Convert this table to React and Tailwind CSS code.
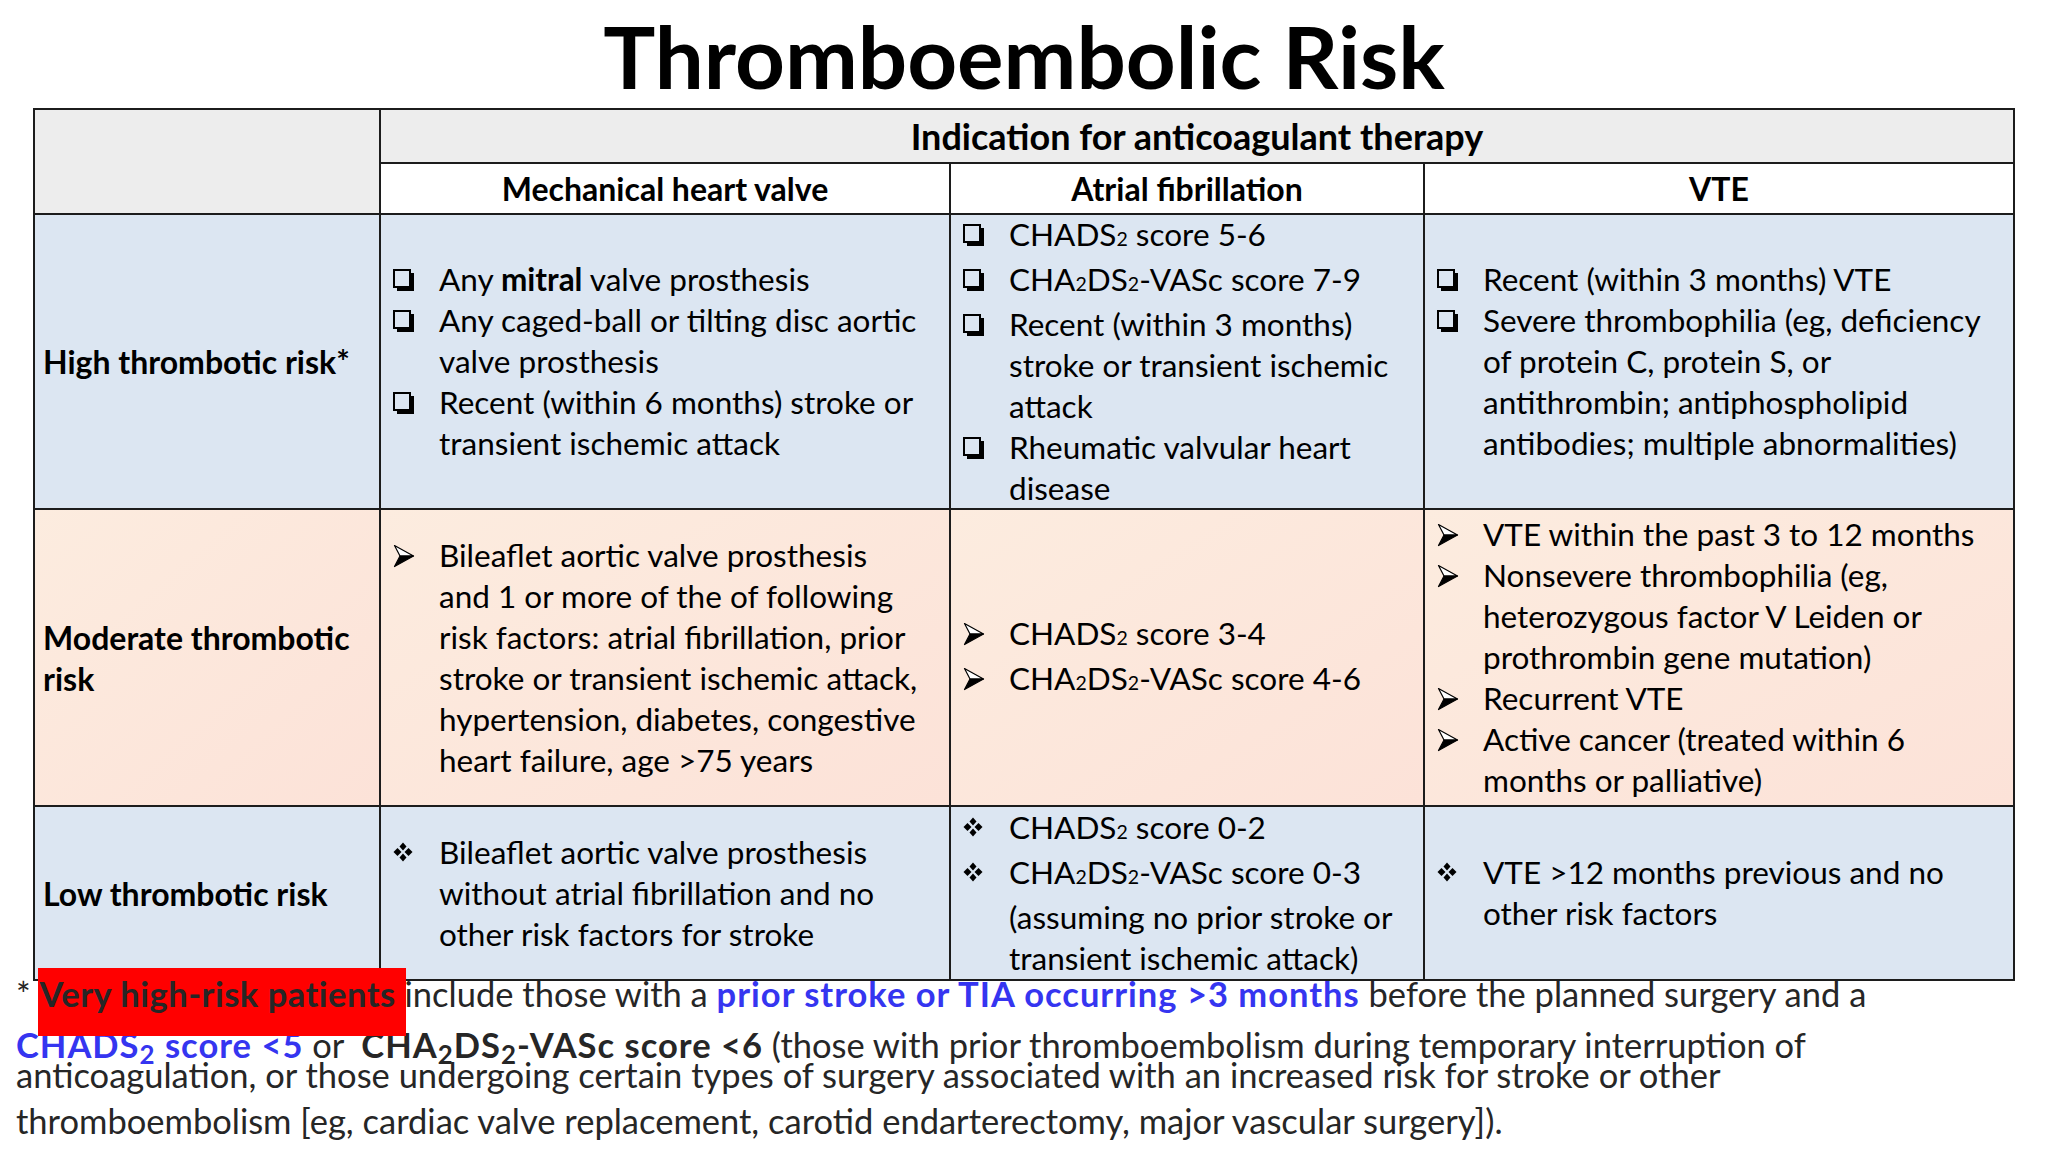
const S2 = () => <span className="text-[0.62em]">2</span>;

function BoxIcon() {
  return (
    <svg width="22" height="23" viewBox="0 0 22 23" className="mt-[10px]">
      <rect x="1" y="1" width="16" height="17" fill="none" stroke="#000" strokeWidth="2" />
      <path d="M18 4 H21 V22 H4 V19 H18 Z" fill="#000" />
    </svg>
  );
}

function ArrowIcon() {
  return (
    <svg width="22" height="24" viewBox="0 0 22 24" className="mt-[9px]">
      <path d="M1.5 1.5 L20.5 12 L7 12 Z" fill="#fff" stroke="#000" strokeWidth="1.2" strokeLinejoin="round" />
      <path d="M7 12 L20.5 12 L1.5 22.5 Z" fill="#000" stroke="#000" strokeWidth="1.2" strokeLinejoin="round" />
    </svg>
  );
}

function DiamondIcon() {
  return (
    <svg width="20" height="20" viewBox="0 0 20 20" className="mt-[10px]">
      <path d="M10 0.5 L13.5 4.5 L10 8.5 L6.5 4.5 Z" fill="#000" />
      <path d="M10 11.5 L13.5 15.5 L10 19.5 L6.5 15.5 Z" fill="#000" />
      <path d="M4.5 6 L8.5 10 L4.5 14 L0.5 10 Z" fill="#000" />
      <path d="M15.5 6 L19.5 10 L15.5 14 L11.5 10 Z" fill="#000" />
    </svg>
  );
}

const ICON = { box: BoxIcon, arrow: ArrowIcon, diamond: DiamondIcon };

function Bullets({ kind, items }) {
  const Icon = ICON[kind];
  return (
    <div className="flex h-full flex-col justify-center pl-[12px]">
      {items.map((lines, i) => (
        <div key={i} className="flex">
          <span className="flex w-[46px] shrink-0 items-start">
            <Icon />
          </span>
          <div className="whitespace-nowrap">
            {lines.map((ln, j) => (
              <div key={j}>{ln}</div>
            ))}
          </div>
        </div>
      ))}
    </div>
  );
}

function Label({ children }) {
  return (
    <div className="flex h-full items-center pl-[8px] text-[32px] font-bold">
      <div>{children}</div>
    </div>
  );
}

const blue = "bg-[#dce6f2]";
const peach = "bg-gradient-to-br from-[#fcecdf] to-[#fce2d8]";

export default function App() {
  return (
    <div className="h-[1152px] w-[2048px] overflow-hidden bg-white font-['Lato',sans-serif] text-black">
      <div className="flex h-[108px] justify-center pt-[12px]">
        <h1 className="text-[87px] font-bold leading-none">Thromboembolic Risk</h1>
      </div>

      <div className="px-[33px]">
        <div className="grid grid-cols-[344px_568px_472px_588px] grid-rows-[52px_49px_293px_295px_172px] gap-[2px] border-2 border-[#1c1c1c] bg-[#1c1c1c] text-[31.5px] leading-[41px]">
          <div className="row-span-2 bg-[#ededed]" />
          <div className="col-span-3 flex items-center justify-center bg-[#ededed] text-[36px] font-bold">
            Indication for anticoagulant therapy
          </div>
          <div className="flex items-center justify-center bg-white text-[32px] font-bold">Mechanical heart valve</div>
          <div className="flex items-center justify-center bg-white text-[32px] font-bold">Atrial fibrillation</div>
          <div className="flex items-center justify-center bg-white text-[32px] font-bold">VTE</div>

          {/* high */}
          <div className={blue}>
            <Label>High thrombotic risk*</Label>
          </div>
          <div className={blue}>
            <Bullets
              kind="box"
              items={[
                [<>Any <b>mitral</b> valve prosthesis</>],
                ["Any caged-ball or tilting disc aortic", "valve prosthesis"],
                ["Recent (within 6 months) stroke or", "transient ischemic attack"],
              ]}
            />
          </div>
          <div className={blue}>
            <Bullets
              kind="box"
              items={[
                [<>CHADS<S2 /> score 5-6</>],
                [<>CHA<S2 />DS<S2 />-VASc score 7-9</>],
                ["Recent (within 3 months)", "stroke or transient ischemic", "attack"],
                ["Rheumatic valvular heart", "disease"],
              ]}
            />
          </div>
          <div className={blue}>
            <Bullets
              kind="box"
              items={[
                ["Recent (within 3 months) VTE"],
                [
                  "Severe thrombophilia (eg, deficiency",
                  "of protein C, protein S, or",
                  "antithrombin; antiphospholipid",
                  "antibodies; multiple abnormalities)",
                ],
              ]}
            />
          </div>

          {/* moderate */}
          <div className={peach}>
            <Label>
              Moderate thrombotic
              <br />
              risk
            </Label>
          </div>
          <div className={peach}>
            <Bullets
              kind="arrow"
              items={[
                [
                  "Bileaflet aortic valve prosthesis",
                  "and 1 or more of the of following",
                  "risk factors: atrial fibrillation, prior",
                  "stroke or transient ischemic attack,",
                  "hypertension, diabetes, congestive",
                  "heart failure, age >75 years",
                ],
              ]}
            />
          </div>
          <div className={peach}>
            <Bullets
              kind="arrow"
              items={[[<>CHADS<S2 /> score 3-4</>], [<>CHA<S2 />DS<S2 />-VASc score 4-6</>]]}
            />
          </div>
          <div className={peach}>
            <Bullets
              kind="arrow"
              items={[
                ["VTE within the past 3 to 12 months"],
                ["Nonsevere thrombophilia (eg,", "heterozygous factor V Leiden or", "prothrombin gene mutation)"],
                ["Recurrent VTE"],
                ["Active cancer (treated within 6", "months or palliative)"],
              ]}
            />
          </div>

          {/* low */}
          <div className={blue}>
            <Label>Low thrombotic risk</Label>
          </div>
          <div className={blue}>
            <Bullets
              kind="diamond"
              items={[
                [
                  "Bileaflet aortic valve prosthesis",
                  "without atrial fibrillation and no",
                  "other risk factors for stroke",
                ],
              ]}
            />
          </div>
          <div className={blue}>
            <Bullets
              kind="diamond"
              items={[
                [<>CHADS<S2 /> score 0-2</>],
                [<>CHA<S2 />DS<S2 />-VASc score 0-3</>, "(assuming no prior stroke or", "transient ischemic attack)"],
              ]}
            />
          </div>
          <div className={blue}>
            <Bullets kind="diamond" items={[["VTE >12 months previous and no", "other risk factors"]]} />
          </div>
        </div>
      </div>

      {/* footnote */}
      <div className="pl-[16px] text-[34.5px] leading-none whitespace-nowrap text-[#262626]">
        <div className="mt-[-4px]">
          *{" "}
          <span className="relative inline-block">
            <span className="absolute left-[-2px] right-[-10px] top-[-9px] bottom-[-24px] bg-[#ff0000]" />
            <span className="relative font-bold tracking-[0.5px]">Very high-risk patients</span>
          </span>{" "}
          include those with a{" "}
          <b className="tracking-[1px] text-[#3535f0]">prior stroke or TIA occurring &gt;3 months</b> before the
          planned surgery and a
        </div>
        <div className="mt-[16px]">
          <b className="tracking-[1px] text-[#3535f0]">
            CHADS<sub>2</sub> score &lt;5
          </b>{" "}
          or&nbsp;{" "}
          <b className="tracking-[1px]">
            CHA<sub>2</sub>DS<sub>2</sub>-VASc score &lt;6
          </b>{" "}
          (those with prior thromboembolism during temporary interruption of
        </div>
        <div className="mt-[-4px]">
          anticoagulation, or those undergoing certain types of surgery associated with an increased risk for stroke
          or other
        </div>
        <div className="mt-[11px]">
          thromboembolism [eg, cardiac valve replacement, carotid endarterectomy, major vascular surgery]).
        </div>
      </div>
    </div>
  );
}
